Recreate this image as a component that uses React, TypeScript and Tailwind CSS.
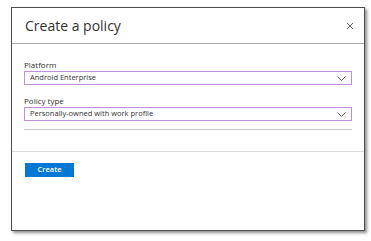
export default function App() {
  return (
    <div className="w-[371px] h-[241px] bg-white pl-[11px] pt-[7px] font-['Open_Sans',sans-serif]">
      <div className="w-[354px] h-[224px] border border-[#4d4d4d] bg-white shadow-[2px_2px_3px_rgba(0,0,0,0.45)] flex flex-col">
        {/* Header */}
        <div className="h-[36px] flex items-center justify-between pl-[13px] pr-[10px] border-b border-[#a8a8a8]">
          <span className="text-[14px] text-[#323130] leading-none">Create a policy</span>
          <svg width="8" height="8" viewBox="0 0 8 8">
            <path d="M1 1L7 7M7 1L1 7" stroke="#605e5c" strokeWidth="1" />
          </svg>
        </div>

        {/* Body */}
        <div className="px-[12px] pt-[17px] pb-[21px] border-b border-[#dcdcdc]">
          <div className="text-[8px] text-[#323130] leading-none mb-[2px]">Platform</div>
          <Select value="Android Enterprise" />
          <div className="text-[8px] text-[#323130] leading-none mt-[12px] mb-[2px]">Policy type</div>
          <Select value="Personally-owned with work profile" />
          <div className="h-px bg-[#c8c8c8] mt-[8px]" />
        </div>

        {/* Footer */}
        <div className="flex px-[13px] pt-[11px]">
          <button className="w-[49px] h-[14px] bg-[#0078d4] text-white text-[7.5px] font-semibold leading-none">
            Create
          </button>
        </div>
      </div>
    </div>
  );
}

function Select({ value }: { value: string }) {
  return (
    <div className="h-[14px] border border-[#c290d6] flex items-center justify-between pl-[5px] pr-[5px]">
      <span className="text-[7.5px] text-[#323130] leading-none">{value}</span>
      <svg width="9" height="5" viewBox="0 0 9 5">
        <path d="M0.5 0.5L4.5 4.5L8.5 0.5" fill="none" stroke="#605e5c" strokeWidth="1" />
      </svg>
    </div>
  );
}
